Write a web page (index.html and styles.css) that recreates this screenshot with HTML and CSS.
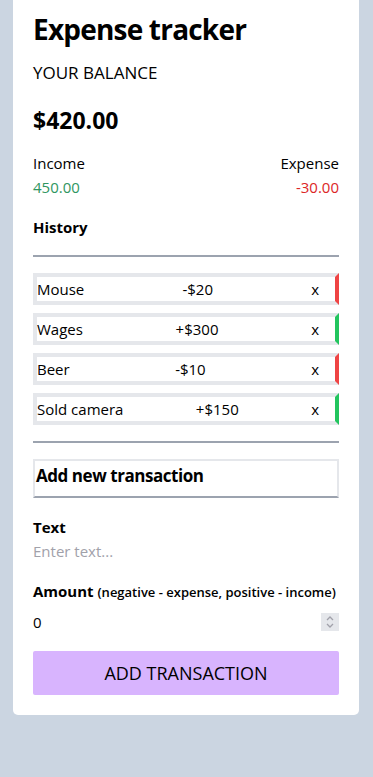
FILE: index.html
```html
<!DOCTYPE html>
<html lang="en">
<head>
<meta charset="utf-8">
<title>Expense tracker</title>
<link rel="stylesheet" href="styles.css">
</head>
<body>
<main class="card">
  <h1 class="title">Expense tracker</h1>
  <h4 class="balance-label">YOUR BALANCE</h4>
  <h2 class="balance">$420.00</h2>
  <div class="totals">
    <div class="total">
      <div class="total-label">Income</div>
      <div class="total-value plus">450.00</div>
    </div>
    <div class="total total-right">
      <div class="total-label">Expense</div>
      <div class="total-value minus">-30.00</div>
    </div>
  </div>
  <h3 class="history">History</h3>
  <hr class="rule">
  <ul class="list">
    <li class="item item-minus"><span class="item-name">Mouse</span><span class="item-amount">-$20</span><button class="del">x</button></li>
    <li class="item item-plus"><span class="item-name">Wages</span><span class="item-amount">+$300</span><button class="del">x</button></li>
    <li class="item item-minus"><span class="item-name">Beer</span><span class="item-amount">-$10</span><button class="del">x</button></li>
    <li class="item item-plus"><span class="item-name">Sold camera</span><span class="item-amount">+$150</span><button class="del">x</button></li>
  </ul>
  <hr class="rule rule-2">
  <h3 class="add-title">Add new transaction</h3>
  <form class="form">
    <label class="label" for="text">Text</label>
    <input class="field" id="text" type="text" placeholder="Enter text...">
    <label class="label label-amount" for="amount">Amount <span class="hint">(negative - expense, positive - income)</span></label>
    <div class="number-row">
      <input class="field number" id="amount" type="number" value="0">
      <span class="spinner" aria-hidden="true">
        <svg width="10" height="16" viewBox="0 0 10 16"><path d="M2 6 L5 3 L8 6" fill="none" stroke="#a1a1aa" stroke-width="1.3"/><path d="M2 10 L5 13 L8 10" fill="none" stroke="#a1a1aa" stroke-width="1.3"/></svg>
      </span>
    </div>
    <button class="btn" type="button">ADD TRANSACTION</button>
  </form>
</main>
</body>
</html>
```

FILE: styles.css
```css
* { box-sizing: border-box; }
html, body { margin: 0; padding: 0; }
body {
  background: #cbd5e1;
  font-family: "Open Sans", "Noto Sans", sans-serif;
  color: #000;
  height: 777px;
  overflow: hidden;
}
.card {
  width: 346px;
  margin-left: 13px;
  background: #fff;
  border-radius: 0 0 5px 5px;
  padding: 9px 20px 20px;
}
.title {
  margin: 0;
  font-size: 28px;
  letter-spacing: -0.8px;
  line-height: 40px;
  font-weight: 700;
}
.balance-label {
  margin: 12px 0 0;
  font-size: 17px;
  line-height: 24px;
  font-weight: 400;
}
.balance {
  margin: 19px 0 0;
  font-size: 23px;
  line-height: 32px;
  font-weight: 700;
}
.totals {
  margin-top: 15px;
  display: flex;
  justify-content: space-between;
}
.total-right { text-align: right; }
.total-label, .total-value {
  font-size: 15px;
  line-height: 24px;
}
.plus { color: #2f9661; }
.minus { color: #dc2626; }
.history {
  margin: 16px 0 0;
  font-size: 15px;
  line-height: 24px;
  font-weight: 700;
}
.rule {
  margin: 16px 0 0;
  border: 0;
  height: 2px;
  background: #9ca3af;
}
.list {
  list-style: none;
  margin: 16px 0 0;
  padding: 0;
  display: flex;
  flex-direction: column;
  gap: 8px;
}
.item {
  display: flex;
  justify-content: space-between;
  align-items: center;
  height: 32px;
  border: 4px solid #e5e7eb;
  padding: 0 16px 0 0;
  font-size: 15px;
  line-height: 24px;
}
.item-minus { border-right-color: #ef4444; }
.item-plus { border-right-color: #22c55e; }
.del {
  background: none;
  border: 0;
  padding: 0;
  font: inherit;
  color: #000;
  line-height: 24px;
}
.rule-2 { margin-top: 16px; }
.add-title {
  margin: 16px 0 0;
  height: 39px;
  border: 2px solid #e5e7eb;
  border-bottom-color: #9ca3af;
  padding: 3px 0 0 1px;
  font-size: 17px;
  letter-spacing: -0.45px;
  line-height: 24px;
  font-weight: 700;
}
.form { display: flex; flex-direction: column; }
.label {
  margin-top: 17px;
  font-size: 15px;
  line-height: 24px;
  font-weight: 700;
}
.label-amount { margin-top: 16px; }
.hint {
  font-size: 13px;
  font-weight: 600;
}
.field {
  border: 0;
  outline: none;
  padding: 0;
  margin: 0;
  height: 24px;
  font: inherit;
  font-size: 15px;
  line-height: 24px;
  color: #000;
  background: transparent;
}
.field::placeholder { color: #a1a1aa; }
.number-row {
  margin-top: 6px;
  display: flex;
  align-items: center;
}
.number { flex: 1; min-width: 0; -moz-appearance: textfield; }
.number::-webkit-inner-spin-button,
.number::-webkit-outer-spin-button { -webkit-appearance: none; margin: 0; }
.spinner {
  width: 18px;
  height: 18px;
  background: #e5e7eb;
  display: flex;
  align-items: center;
  justify-content: center;
}
.btn {
  margin-top: 17px;
  height: 44px;
  border: 0;
  border-radius: 2px;
  background: #d8b4fe;
  font-family: inherit;
  font-size: 18px;
  color: #000;
}
```
